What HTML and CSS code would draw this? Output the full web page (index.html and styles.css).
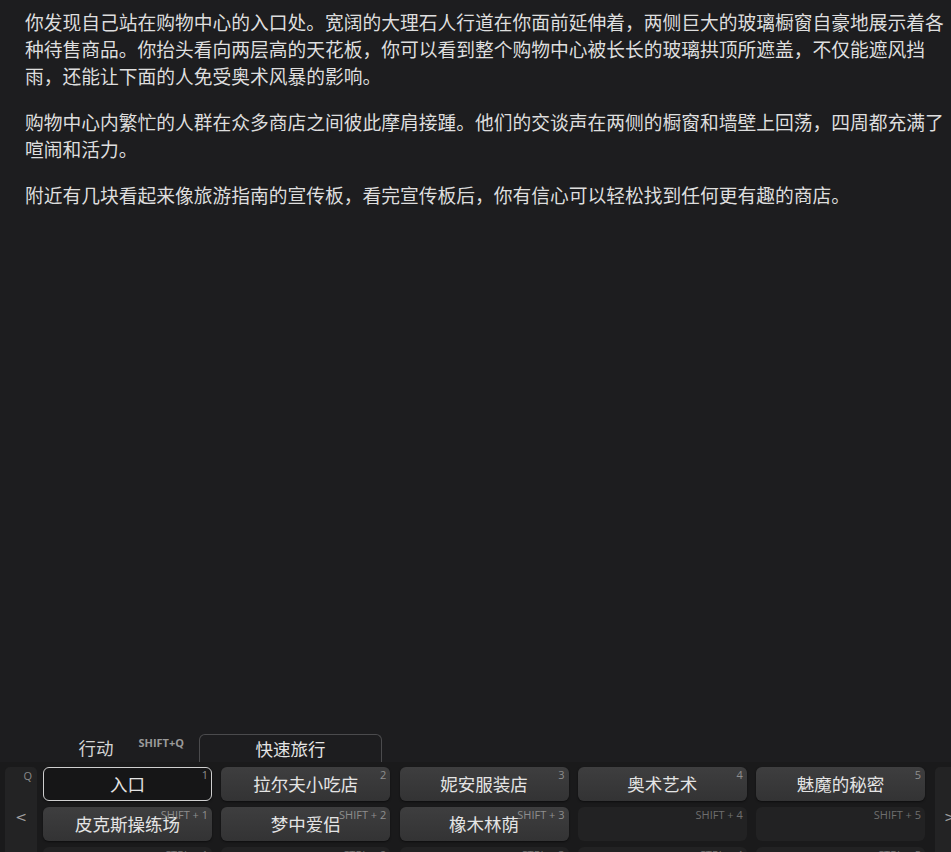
FILE: index.html
```html
<!DOCTYPE html>
<html lang="zh-CN">
  <head>
    <meta charset="UTF-8" />
    <meta name="viewport" content="width=device-width, initial-scale=1.0" />
    <title>购物中心入口</title>
    <link rel="stylesheet" href="styles.css">
  </head>
  <body>
    <main class="story">
      <p>你发现自己站在购物中心的入口处。宽阔的大理石人行道在你面前延伸着，两侧巨大的玻璃橱窗自豪地展示着各种待售商品。你抬头看向两层高的天花板，你可以看到整个购物中心被长长的玻璃拱顶所遮盖，不仅能遮风挡雨，还能让下面的人免受奥术风暴的影响。</p>
      <p>购物中心内繁忙的人群在众多商店之间彼此摩肩接踵。他们的交谈声在两侧的橱窗和墙壁上回荡，四周都充满了喧闹和活力。</p>
      <p>附近有几块看起来像旅游指南的宣传板，看完宣传板后，你有信心可以轻松找到任何更有趣的商店。</p>
    </main>

    <footer class="dock">
      <div class="tabs">
        <div class="tab">行动<span class="tab-key">SHIFT+Q</span></div>
        <div class="tab active">快速旅行</div>
      </div>

      <div class="bar">
        <div class="side side-left">
          <span class="hint">Q</span>
          <span class="arrow">&lt;</span>
        </div>

        <div class="grid">
          <button class="slot selected">入口<span class="hint">1</span></button>
          <button class="slot">拉尔夫小吃店<span class="hint">2</span></button>
          <button class="slot">妮安服装店<span class="hint">3</span></button>
          <button class="slot">奥术艺术<span class="hint">4</span></button>
          <button class="slot">魅魔的秘密<span class="hint">5</span></button>

          <button class="slot">皮克斯操练场<span class="hint">SHIFT + 1</span></button>
          <button class="slot">梦中爱侣<span class="hint">SHIFT + 2</span></button>
          <button class="slot">橡木林荫<span class="hint">SHIFT + 3</span></button>
          <button class="slot empty"><span class="hint">SHIFT + 4</span></button>
          <button class="slot empty"><span class="hint">SHIFT + 5</span></button>

          <button class="slot empty"><span class="hint">CTRL + 1</span></button>
          <button class="slot empty"><span class="hint">CTRL + 2</span></button>
          <button class="slot empty"><span class="hint">CTRL + 3</span></button>
          <button class="slot empty"><span class="hint">CTRL + 4</span></button>
          <button class="slot empty"><span class="hint">CTRL + 5</span></button>
        </div>

        <div class="side side-right">
          <span class="arrow">&gt;</span>
        </div>
      </div>
    </footer>
  </body>
</html>
```

FILE: styles.css
```css
html,
body {
  margin: 0;
  height: 100%;
}
body {
  height: 852px;
  display: flex;
  flex-direction: column;
  overflow: hidden;
  background-color: #1d1d1f;
  color: #dedede;
  font-family: "Noto Sans CJK SC", "Noto Sans", sans-serif;
}
.story {
  flex: 1;
  padding: 8px 4px 0 25px;
  font-size: 18.75px;
  line-height: 27px;
}
.story p {
  margin: 0 0 19px;
}
.dock {
  flex: none;
  height: 119px;
  overflow: hidden;
}
.tabs {
  display: flex;
  height: 29px;
  padding-left: 20px;
}
.tab {
  position: relative;
  width: 178px;
  box-sizing: border-box;
  display: flex;
  align-items: center;
  justify-content: center;
  font-size: 17.5px;
  color: #d4d4d4;
  padding-right: 26px;
}
.tab-key {
  position: absolute;
  right: 14px;
  top: 2px;
  font-family: "Open Sans", "Noto Sans", sans-serif;
  font-size: 11px;
  font-weight: bold;
  color: #9a9a9a;
}
.tab.active {
  width: 183px;
  margin-left: 1px;
  padding-right: 0;
  border: 1px solid #4b4b4d;
  border-bottom: none;
  border-radius: 6px 6px 0 0;
  color: #e4e4e4;
  margin-top: 1px;
}
.bar {
  display: flex;
  padding: 5px 0 0 5px;
  background-color: #1a1a1b;
  height: 90px;
  overflow: hidden;
}
.side {
  flex: none;
  position: relative;
  width: 32px;
  height: 120px;
  background-color: #232324;
  border-radius: 5px 5px 0 0;
  display: flex;
  justify-content: center;
  color: #a0a0a0;
}
.side-left {
  margin-right: 6px;
}
.side-right {
  margin-left: 10px;
  justify-content: flex-start;
  padding-left: 9px;
  box-sizing: border-box;
}
.side .hint {
  position: absolute;
  top: 1px;
  right: 5px;
  font-family: "Open Sans", sans-serif;
  font-size: 11px;
  color: #8a8a8a;
}
.arrow {
  margin-top: 42px;
  font-family: "DejaVu Sans", sans-serif;
  font-size: 14px;
}
.grid {
  flex: none;
  width: 882px;
  display: grid;
  grid-template-columns: repeat(5, 1fr);
  grid-template-rows: repeat(3, 34px);
  column-gap: 9.25px;
  row-gap: 6px;
}
.slot {
  position: relative;
  padding: 0;
  border: none;
  border-radius: 6px;
  background: linear-gradient(#3e3e3f, #333334);
  box-shadow: 0 1px 2px rgba(0, 0, 0, 0.5);
  color: #e4e4e4;
  font-family: "Noto Sans CJK SC", "Noto Sans", sans-serif;
  font-size: 17.5px;
  line-height: 34px;
  text-align: center;
  cursor: pointer;
}
.slot.selected {
  background: #161617;
  border: 1px solid #cfcfcf;
  line-height: 32px;
}
.slot.empty {
  background: #222223;
  box-shadow: none;
}
.slot .hint {
  position: absolute;
  top: 1px;
  right: 4px;
  font-family: "Open Sans", sans-serif;
  font-size: 11px;
  line-height: 14px;
  color: #8e8e8e;
}
.slot.empty .hint {
  color: #6e6e6e;
}
.slot.selected .hint {
  top: 0;
  right: 3px;
}
```
